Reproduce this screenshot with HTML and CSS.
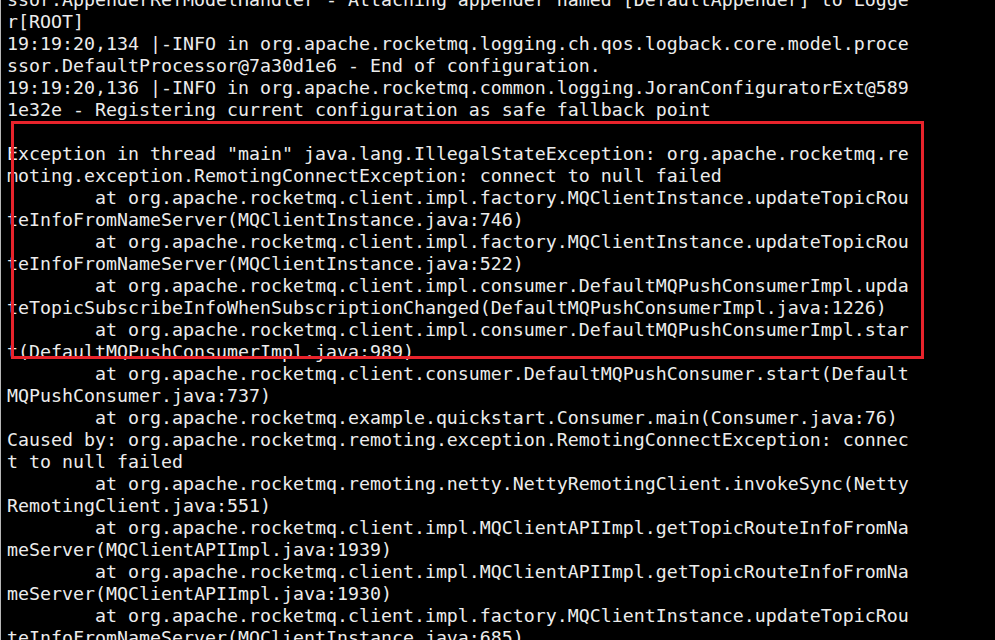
FILE: index.html
```html
<!DOCTYPE html>
<html>
<head>
<meta charset="utf-8">
<link rel="stylesheet" href="styles.css">
</head>
<body>
<div class="term">
<pre class="log">ssor.AppenderRefModelHandler - Attaching appender named [DefaultAppender] to Logge
r[ROOT]
19:19:20,134 |-INFO in org.apache.rocketmq.logging.ch.qos.logback.core.model.proce
ssor.DefaultProcessor@7a30d1e6 - End of configuration.
19:19:20,136 |-INFO in org.apache.rocketmq.common.logging.JoranConfiguratorExt@589
1e32e - Registering current configuration as safe fallback point

Exception in thread "main" java.lang.IllegalStateException: org.apache.rocketmq.re
moting.exception.RemotingConnectException: connect to null failed
        at org.apache.rocketmq.client.impl.factory.MQClientInstance.updateTopicRou
teInfoFromNameServer(MQClientInstance.java:746)
        at org.apache.rocketmq.client.impl.factory.MQClientInstance.updateTopicRou
teInfoFromNameServer(MQClientInstance.java:522)
        at org.apache.rocketmq.client.impl.consumer.DefaultMQPushConsumerImpl.upda
teTopicSubscribeInfoWhenSubscriptionChanged(DefaultMQPushConsumerImpl.java:1226)
        at org.apache.rocketmq.client.impl.consumer.DefaultMQPushConsumerImpl.star
t(DefaultMQPushConsumerImpl.java:989)
        at org.apache.rocketmq.client.consumer.DefaultMQPushConsumer.start(Default
MQPushConsumer.java:737)
        at org.apache.rocketmq.example.quickstart.Consumer.main(Consumer.java:76)
Caused by: org.apache.rocketmq.remoting.exception.RemotingConnectException: connec
t to null failed
        at org.apache.rocketmq.remoting.netty.NettyRemotingClient.invokeSync(Netty
RemotingClient.java:551)
        at org.apache.rocketmq.client.impl.MQClientAPIImpl.getTopicRouteInfoFromNa
meServer(MQClientAPIImpl.java:1939)
        at org.apache.rocketmq.client.impl.MQClientAPIImpl.getTopicRouteInfoFromNa
meServer(MQClientAPIImpl.java:1930)
        at org.apache.rocketmq.client.impl.factory.MQClientInstance.updateTopicRou
teInfoFromNameServer(MQClientInstance.java:685)</pre>
<div class="highlight"></div>
</div>
</body>
</html>
```
FILE: styles.css
```css
html, body {
  margin: 0;
  padding: 0;
  background: #000;
  overflow: hidden;
}
.term {
  position: relative;
  width: 995px;
  height: 640px;
  box-sizing: border-box;
  border-left: 1px solid #b8b8b8;
  background: #000;
  overflow: hidden;
}
.log {
  margin: -11px 0 0 0;
  padding-left: 6px;
  font-family: "DejaVu Sans Mono", monospace;
  font-size: 18.27px;
  line-height: 22px;
  color: #ececec;
  white-space: pre;
}
.highlight {
  position: absolute;
  left: 10px;
  top: 121px;
  width: 907px;
  height: 232px;
  border: 3px solid #e8232b;
}
```
